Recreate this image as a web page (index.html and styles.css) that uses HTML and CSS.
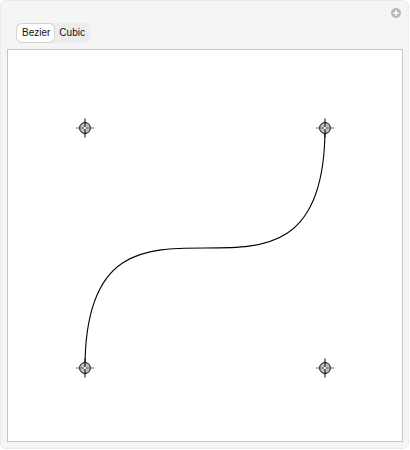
FILE: index.html
```html
<!DOCTYPE html>
<html>
<head>
<meta charset="utf-8">
<link rel="stylesheet" href="styles.css">
</head>
<body>
<div class="panel">
  <div class="topbar">
    <span class="close">
      <svg width="10" height="10" viewBox="0 0 10 10"><circle cx="5" cy="5" r="5" fill="#b8b8b8"/><path d="M5 2.3V7.7M2.3 5H7.7" stroke="#fff" stroke-width="1.6"/></svg>
    </span>
  </div>
  <div class="tabs">
    <span class="tab active">Bezier</span>
    <span class="tab">Cubic</span>
  </div>
  <div class="canvas">
    <svg width="395" height="393" viewBox="7 49 395 393">
      <path d="M84 367 C84 127 324 367 324 127" fill="none" stroke="#000" stroke-width="1.1"/>
      <g transform="translate(84 127)"><use href="#m"/></g>
      <g transform="translate(324 127)"><use href="#m"/></g>
      <g transform="translate(84 367)"><use href="#m"/></g>
      <g transform="translate(324 367)"><use href="#m"/></g>
      <defs>
        <g id="m">
          <circle r="5.5" fill="#bdbdbd" stroke="#111" stroke-width="1"/>
          <path d="M-9 0H9" stroke="#666" stroke-width="1"/>
          <path d="M0 -9.5V9.5" stroke="#000" stroke-width="1"/>
          <circle r="1.2" fill="#e6e6e6"/>
        </g>
      </defs>
    </svg>
  </div>
</div>
</body>
</html>
```
FILE: styles.css
```css
html, body { margin: 0; padding: 0; background: #fff; }
body { width: 410px; height: 450px; font-family: "Liberation Sans", Arial, sans-serif; }
.panel {
  box-sizing: border-box;
  width: 409px; height: 449px;
  background: #f5f5f5;
  border: 1px solid #ebebeb;
  border-radius: 6px;
  padding: 0 6px 6px 6px;
  display: flex; flex-direction: column;
}
.topbar { height: 22px; display: flex; justify-content: flex-end; align-items: flex-start; }
.close { margin-top: 7px; margin-right: 1px; display: flex; }
.tabs {
  align-self: flex-start;
  margin-left: 9px;
  display: flex;
  background: #ececec;
  border-radius: 6px;
  padding: 1px;
  height: 18px;
}
.tab {
  font-size: 10px; color: #111;
  padding: 0 4px 0 5px; line-height: 18px;
  border-radius: 5px;
}
.tab.active {
  background: #fff;
  box-shadow: 0 0 0 1px #d4d4d4;
  padding: 0 4px 0 5px;
}
.canvas {
  margin-top: 6px;
  box-sizing: border-box;
  width: 396px; height: 394px;
  background: #fff;
  border: 1px solid #c6c6c6;
  overflow: hidden;
}
.canvas svg { display: block; margin: 0; }
```
